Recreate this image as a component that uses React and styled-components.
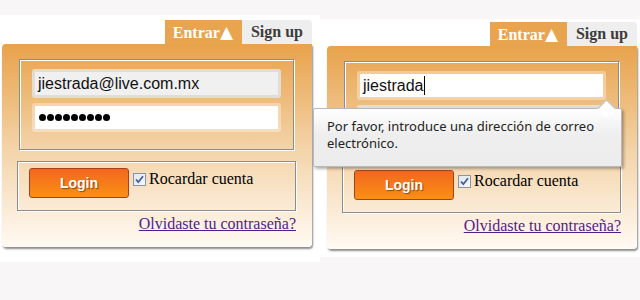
import React from "react";
import styled, { createGlobalStyle } from "styled-components";

const GlobalStyle = createGlobalStyle`
  html, body {
    margin: 0;
    padding: 0;
    background: #f8f6f6;
  }
  body {
    font-family: "Liberation Serif", "Times New Roman", serif;
  }
`;

const Page = styled.div`
  display: flex;
  width: 640px;
  height: 300px;
  overflow: hidden;
`;

const Shot = styled.div`
  width: 320px;
  flex: none;
`;

const Canvas = styled.div`
  background: #ffffff;
  margin-top: ${(p) => p.$top}px;
  height: ${(p) => p.$height}px;
  padding: ${(p) => p.$padTop}px 0 0 ${(p) => p.$padLeft}px;
  box-sizing: border-box;
`;

const Widget = styled.div`
  position: relative;
  width: 310px;
`;

const Tabs = styled.div`
  display: flex;
  justify-content: flex-end;
  height: 24px;
`;

const Tab = styled.div`
  display: flex;
  align-items: baseline;
  padding-left: ${(p) => (p.$active ? "8px" : "9px")};
  padding-right: 9px;
  line-height: 24px;
  font-size: 16px;
  font-weight: bold;
  background: ${(p) => (p.$active ? "#e8a44e" : "#eeeeee")};
  color: ${(p) => (p.$active ? "#ffffff" : "#3c3c3c")};
  border-radius: ${(p) => (p.$active ? "0" : "0 4px 0 0")};
`;

const Arrow = styled.span`
  font-family: "DejaVu Sans", sans-serif;
  font-size: 17px;
  font-weight: normal;
  line-height: 24px;
`;

const Panel = styled.div`
  display: flex;
  flex-direction: column;
  height: 203px;
  box-sizing: border-box;
  padding: 15px 16px 0 15px;
  border-radius: 4px 0 4px 4px;
  background: linear-gradient(to bottom, #e8a24b 0%, #f3d2a6 50%, #fffaf3 100%);
  box-shadow: 1px 2px 2px rgba(0, 0, 0, 0.45);
`;

const Group = styled.div`
  border: 1px solid #8c8c8c;
  box-shadow: inset 1px 1px 0 #ffffff, 1px 1px 0 #ffffff;
  box-sizing: border-box;
`;

const Credentials = styled(Group)`
  margin: 0 2px;
  height: 91px;
  padding: 9px 12px 0 12px;
  display: flex;
  flex-direction: column;
  gap: 5px;
`;

const Field = styled.div`
  display: flex;
  align-items: center;
  height: 29px;
  box-sizing: border-box;
  padding-left: 3px;
  border: 3px solid
    ${(p) => (p.$filled ? "rgba(225, 225, 225, 0.9)" : "rgba(255, 255, 255, 0.35)")};
  border-radius: 3px;
  background: ${(p) => (p.$filled ? "#f0f0f0" : "#ffffff")};
  background-clip: padding-box;
  font-family: "Liberation Sans", Arial, sans-serif;
  font-size: 16px;
  color: #111111;
`;

const Caret = styled.span`
  display: inline-block;
  width: 1px;
  height: 19px;
  background: #000000;
  margin-left: 1px;
`;

const Dots = styled.div`
  display: flex;
  gap: 1px;
  padding-left: 1px;
`;

const Dot = styled.span`
  width: 7px;
  height: 7px;
  border-radius: 50%;
  background: #000000;
`;

const Actions = styled(Group)`
  margin-top: 11px;
  height: 50px;
  padding: 6px 0 0 11px;
  display: flex;
  align-items: flex-start;
`;

const LoginButton = styled.button`
  width: 100px;
  height: 30px;
  padding: 0;
  border: 1px solid #a9401b;
  border-radius: 3px;
  background: linear-gradient(to bottom, #f2671f 0%, #fa9013 100%);
  color: #ffffff;
  font-family: "Liberation Sans", Arial, sans-serif;
  font-weight: bold;
  font-size: 14px;
  text-shadow: 1px 1px 1px rgba(0, 0, 0, 0.45);
`;

const Check = styled.span`
  display: inline-flex;
  margin: 5px 0 0 4px;
  width: 13px;
  height: 13px;
`;

const Remember = styled.span`
  margin: 2px 0 0 3px;
  font-size: 16px;
  line-height: 18px;
  color: #000000;
`;

const Forgot = styled.a`
  align-self: flex-end;
  margin-top: 4px;
  font-size: 16px;
  line-height: 18px;
  color: #551a8b;
  text-decoration: underline;
`;

const Tooltip = styled.div`
  position: absolute;
  left: -14px;
  top: 86px;
  width: 309px;
  height: 59px;
  box-sizing: border-box;
  padding: 9px 14px 0 13px;
  border: 1px solid #b9b9b9;
  border-radius: 2px;
  background: linear-gradient(to bottom, #ffffff 0%, #eeeeee 45%, #ececec 100%);
  box-shadow: 2px 2px 3px rgba(0, 0, 0, 0.3);
  font-family: "Noto Sans", "Open Sans", sans-serif;
  font-size: 13px;
  line-height: 17px;
  color: #222222;
  z-index: 2;

  &::before {
    content: "";
    position: absolute;
    left: 286px;
    top: -7px;
    width: 12px;
    height: 12px;
    background: #ffffff;
    border-top: 1px solid #b9b9b9;
    border-left: 1px solid #b9b9b9;
    transform: rotate(45deg);
  }
`;

function CheckIcon() {
  return (
    <svg width="13" height="13" viewBox="0 0 13 13">
      <defs>
        <linearGradient id="cb" x1="0" y1="0" x2="1" y2="1">
          <stop offset="0" stopColor="#dfe6ee" />
          <stop offset="1" stopColor="#f6f8fb" />
        </linearGradient>
      </defs>
      <rect x="0.5" y="0.5" width="12" height="12" fill="url(#cb)" stroke="#8b94a3" />
      <path d="M3 6.5 L5.3 9.2 L10 3.3" fill="none" stroke="#3d5f9e" strokeWidth="1.8" />
    </svg>
  );
}

function LoginBox({ email, typing, filledEmail, tooltip }) {
  return (
    <Widget>
      <Tabs>
        <Tab $active>
          Entrar<Arrow>▲</Arrow>
        </Tab>
        <Tab>Sign up</Tab>
      </Tabs>
      <Panel>
        <Credentials>
          <Field $filled={filledEmail}>
            {email}
            {typing && <Caret />}
          </Field>
          <Field $filled={typing}>
            <Dots>
              {Array.from({ length: 9 }).map((_, i) => (
                <Dot key={i} />
              ))}
            </Dots>
          </Field>
        </Credentials>
        <Actions>
          <LoginButton type="button">Login</LoginButton>
          <Check>
            <CheckIcon />
          </Check>
          <Remember>Rocardar cuenta</Remember>
        </Actions>
        <Forgot href="#">Olvidaste tu contraseña?</Forgot>
      </Panel>
      {tooltip && (
        <Tooltip>Por favor, introduce una dirección de correo electrónico.</Tooltip>
      )}
    </Widget>
  );
}

export default function App() {
  return (
    <>
      <GlobalStyle />
      <Page>
        <Shot>
          <Canvas $top={15} $height={247} $padTop={5} $padLeft={2}>
            <LoginBox email="jiestrada@live.com.mx" filledEmail />
          </Canvas>
        </Shot>
        <Shot>
          <Canvas $top={19} $height={238} $padTop={3} $padLeft={7}>
            <LoginBox email="jiestrada" typing tooltip />
          </Canvas>
        </Shot>
      </Page>
    </>
  );
}
